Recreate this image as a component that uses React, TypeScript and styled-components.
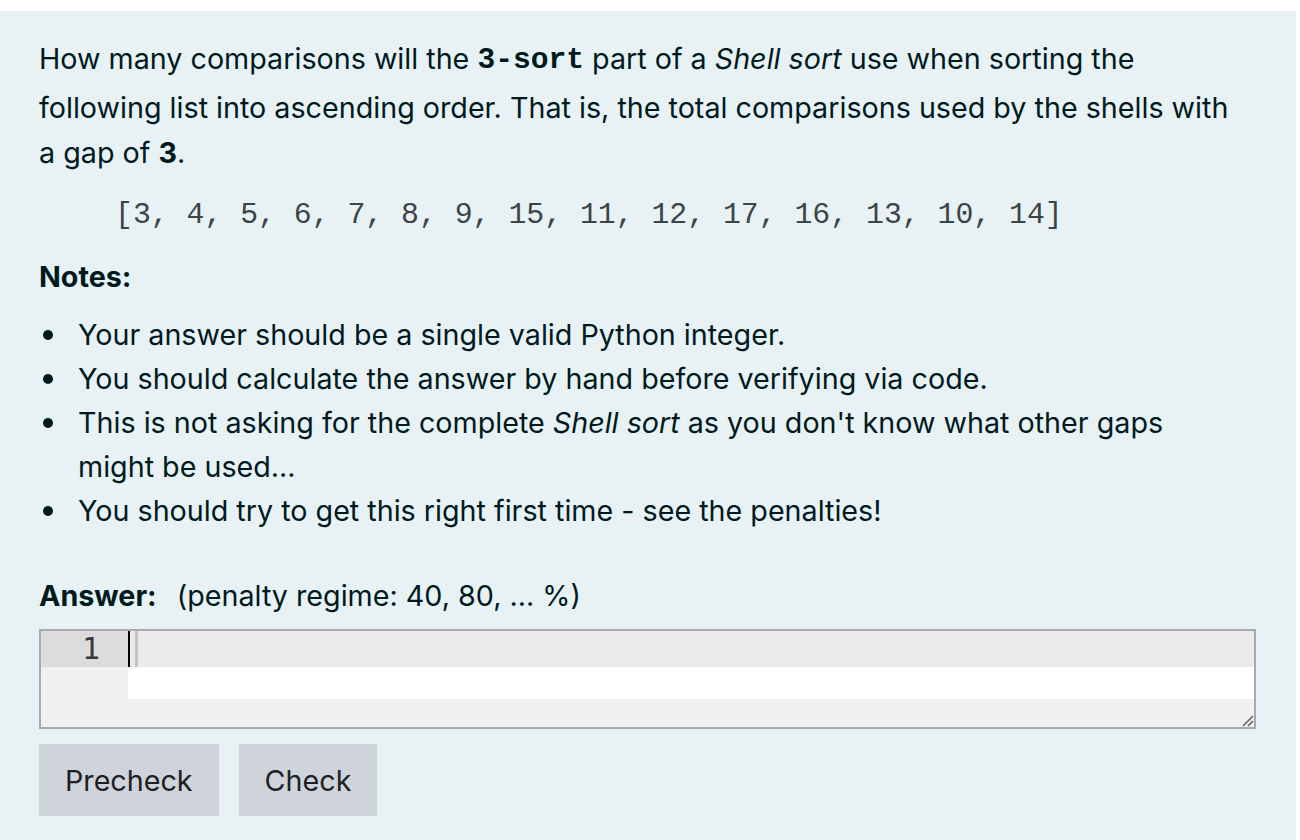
import styled, { createGlobalStyle } from 'styled-components'

const GlobalStyle = createGlobalStyle`
  html, body {
    margin: 0;
    padding: 0;
    background: #fff;
  }
  body {
    font-family: Inter, "Noto Sans", sans-serif;
    overflow: hidden;
  }
`;

const notes = [
  <>Your answer should be a single valid Python integer.</>,
  <>You should calculate the answer by hand before verifying via code.</>,
  <>This is not asking for the complete <em>Shell sort</em> as you don't know what other gaps might be used...</>,
  <>You should try to get this right first time - see the penalties!</>,
]

export default function App() {
  return (
    <>
      <GlobalStyle />
      <Panel>
        <QText>
          How many comparisons will the <Code>3-sort</Code> part of a <em>Shell sort</em> use when sorting the
          following list into ascending order. That is, the total comparisons used by the shells with
          a gap of <strong>3</strong>.
        </QText>
        <ListBlock>[3, 4, 5, 6, 7, 8, 9, 15, 11, 12, 17, 16, 13, 10, 14]</ListBlock>
        <Heading>Notes:</Heading>
        <NoteList>
          {notes.map((n, i) => (
            <Note key={i}>{n}</Note>
          ))}
        </NoteList>
        <AnswerRow>
          <Label>Answer:</Label>
          <span>(penalty regime: 40, 80, ... %)</span>
        </AnswerRow>
        <Editor>
          <EditorRows>
            <Gutter>
              <LineNo>1</LineNo>
            </Gutter>
            <Content>
              <ActiveLine>
                <Cursor />
                <Stub />
              </ActiveLine>
            </Content>
          </EditorRows>
          <EditorFoot>
            <svg width="16" height="16" viewBox="0 0 16 16">
              <path d="M15 5 L5 15 M15 10 L10 15" stroke="#666" strokeWidth="1.6" />
            </svg>
          </EditorFoot>
        </Editor>
        <Buttons>
          <Button>Precheck</Button>
          <Button>Check</Button>
        </Buttons>
      </Panel>
    </>
  )
}

const Panel = styled.div`
  margin: 11px 4px 0 0;
  min-height: 840px;
  background: #e8f1f4;
  color: #001a1e;
  padding: 25px 40px 0 39px;
  font-size: 28.7px;
  line-height: 45px;
`;

const QText = styled.p`
  margin: 0;
  max-width: 1202px;
  em { font-style: italic; }
  strong { font-weight: 700; }
`;

const Code = styled.code`
  font-family: "Liberation Mono", monospace;
  font-weight: 700;
  font-size: 29.6px;
  line-height: 49px;
  vertical-align: top;
`;

const ListBlock = styled.pre`
  margin: 18px 0 0 76px;
  font-family: "Liberation Mono", monospace;
  font-size: 29.8px;
  line-height: 45px;
  color: #3b4447;
`;

const Heading = styled.div`
  font-weight: 700;
  margin-top: 16px;
`;

const NoteList = styled.ul`
  margin: 14px 0 0 0;
  padding: 0;
  max-width: 1202px;
  list-style: none;
  line-height: 44px;
`;

const Note = styled.li`
  position: relative;
  padding-left: 39px;
  &::before {
    content: '';
    position: absolute;
    left: 4px;
    top: 17px;
    width: 10px;
    height: 10px;
    border-radius: 50%;
    background: #001a1e;
  }
`;

const AnswerRow = styled.div`
  margin-top: 40px;
  display: flex;
  gap: 20px;
`;

const Label = styled.span`
  font-weight: 700;
`;

const Editor = styled.div`
  margin-top: 11px;
  width: 1217px;
  height: 100px;
  box-sizing: border-box;
  border: 2px solid #aaa;
  background: #f0f0f0;
  display: flex;
  flex-direction: column;
`;

const EditorRows = styled.div`
  display: flex;
  height: 68px;
`;

const Gutter = styled.div`
  width: 87px;
  background: #f0f0f0;
`;

const LineNo = styled.div`
  height: 36px;
  background: #dcdcdc;
  text-align: right;
  padding-right: 28px;
  font-family: "DejaVu Sans Mono", monospace;
  font-size: 30px;
  line-height: 36px;
  color: #3a3a3a;
`;

const Content = styled.div`
  flex: 1;
  background: #fff;
`;

const ActiveLine = styled.div`
  height: 36px;
  background: #ebebeb;
  display: flex;
`;

const Cursor = styled.div`
  width: 2px;
  background: #000;
`;

const Stub = styled.div`
  width: 3px;
  margin-left: 5px;
  background: #c4c4c4;
`;

const EditorFoot = styled.div`
  flex: 1;
  display: flex;
  justify-content: flex-end;
  align-items: flex-end;
`;

const Buttons = styled.div`
  display: flex;
  gap: 20px;
  margin-top: 15px;
`;

const Button = styled.button`
  font-family: Inter, "Noto Sans", sans-serif;
  font-size: 28.7px;
  color: #1d2125;
  background: #ced4da;
  border: none;
  height: 72px;
  padding: 0 26px;
`;
